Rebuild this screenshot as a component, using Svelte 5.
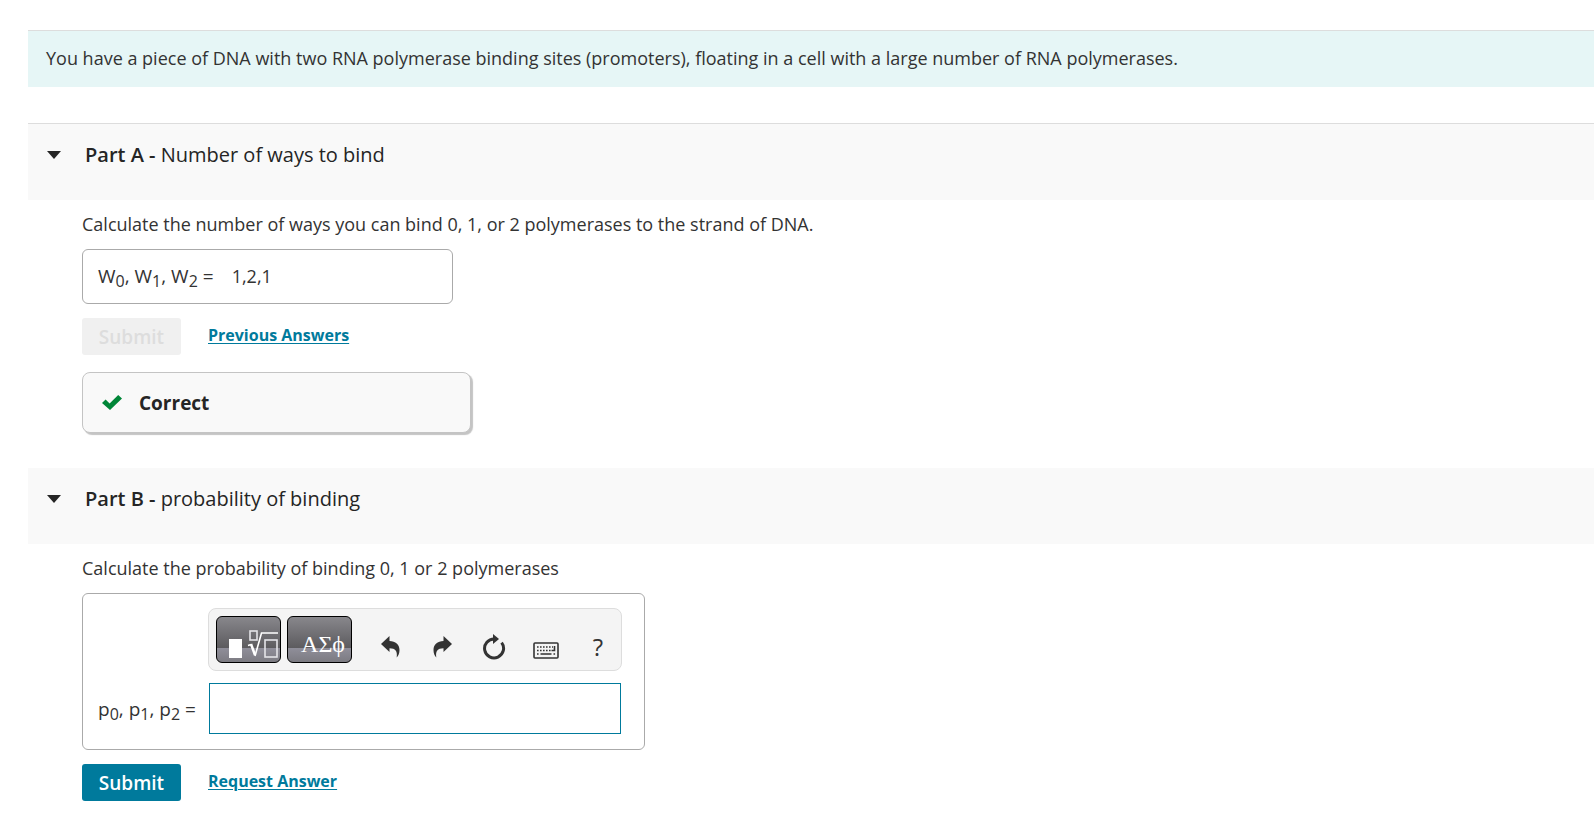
<script>
	let openA = $state(true);
	let openB = $state(true);
	let answerA = $state('1,2,1');
	let answerB = $state('');
	let past = $state([]);
	let future = $state([]);

	function remember() {
		past.push(answerB);
		future = [];
	}

	function undo() {
		if (!past.length) return;
		future.push(answerB);
		answerB = past.pop();
	}

	function redo() {
		if (!future.length) return;
		past.push(answerB);
		answerB = future.pop();
	}

	function insert(text) {
		remember();
		answerB += text;
	}

	function reset() {
		remember();
		answerB = '';
	}
</script>

<svelte:head>
	<title>Polymerase binding</title>
</svelte:head>

<main class="page">
	<p class="intro">
		You have a piece of DNA with two RNA polymerase binding sites (promoters), floating in a cell
		with a large number of RNA polymerases.
	</p>

	<section class="part">
		<h2 class="part-title first">
			<button class="toggle" aria-expanded={openA} onclick={() => (openA = !openA)}>
				<svg class="caret" class:closed={!openA} width="14" height="8" viewBox="0 0 14 8">
					<path d="M0 0h14L7 8z" fill="currentColor" />
				</svg>
				<span><b>Part A -</b> Number of ways to bind</span>
			</button>
		</h2>
		{#if openA}
			<div class="part-body">
				<p class="prompt">
					Calculate the number of ways you can bind 0, 1, or 2 polymerases to the strand of DNA.
				</p>
				<div class="answer done">
					<label for="answer-a">W<sub>0</sub>, W<sub>1</sub>, W<sub>2</sub> =</label>
					<input id="answer-a" type="text" readonly bind:value={answerA} />
				</div>
				<div class="actions">
					<button class="submit" disabled>Submit</button>
					<a href="#previous">Previous Answers</a>
				</div>
				<div class="feedback">
					<svg width="20" height="15" viewBox="0 0 20 15">
						<path d="M0 8l3.6-3.6 4 4L16.2 0 20 3.6 8 15z" fill="#008638" />
					</svg>
					<span>Correct</span>
				</div>
			</div>
		{/if}
	</section>

	<section class="part">
		<h2 class="part-title">
			<button class="toggle" aria-expanded={openB} onclick={() => (openB = !openB)}>
				<svg class="caret" class:closed={!openB} width="14" height="8" viewBox="0 0 14 8">
					<path d="M0 0h14L7 8z" fill="currentColor" />
				</svg>
				<span><b>Part B -</b> probability of binding</span>
			</button>
		</h2>
		{#if openB}
			<div class="part-body">
				<p class="prompt">Calculate the probability of binding 0, 1 or 2 polymerases</p>
				<div class="answer editor">
					<div class="toolbar">
						<button class="palette" aria-label="Templates" onclick={() => insert('√')}>
							<svg width="63" height="45" viewBox="0 0 63 45">
								<rect x="12" y="22" width="13" height="19" fill="#fff" />
								<g fill="none" stroke="#fff">
									<path d="M31 28.500l3-1" stroke-width="1.500" />
									<path d="M34 27l4 11" stroke-width="2.500" />
									<path d="M38 39l6.500-23H61" stroke-width="1.600" />
									<rect x="33" y="14" width="7" height="9" stroke="#e4e4e8" stroke-width="1.600" />
									<rect x="48" y="23" width="12" height="17" stroke="#e4e4e8" stroke-width="1.600" />
								</g>
							</svg>
						</button>
						<button class="palette symbols" onclick={() => insert('ϕ')}>ΑΣϕ</button>
						<div class="tools">
							<button class="tool" aria-label="Undo" onclick={undo}>
								<svg width="19" height="22" viewBox="0 0 19 22">
									<path
										d="M0 8L8.500 0v5C14.500 5 18.500 8.500 18.500 14c0 3-1 5.500-2.800 7.500C16.600 15 14.500 12.300 8.500 12.300V16z"
										fill="#333"
									/>
								</svg>
							</button>
							<button class="tool" aria-label="Redo" onclick={redo}>
								<svg width="19" height="22" viewBox="0 0 19 22">
									<path
										d="M19 8L10.500 0v5C4.500 5 .500 8.500 .500 14c0 3 1 5.500 2.800 7.500C2.400 15 4.500 12.300 10.500 12.300V16z"
										fill="#333"
									/>
								</svg>
							</button>
							<button class="tool" aria-label="Reset" onclick={reset}>
								<svg width="24" height="26" viewBox="0 0 24 26">
									<path
										d="M12.500 4.900A9.500 9.500 0 1 0 19.600 8.600"
										fill="none"
										stroke="#333"
										stroke-width="3"
									/>
									<path d="M11 0l6 5-6 5z" fill="#333" />
								</svg>
							</button>
							<button class="tool" aria-label="Keyboard shortcuts">
								<svg class="keys" width="26" height="17" viewBox="0 0 26 17">
									<rect x="1" y="1" width="24" height="15" rx="1" fill="none" stroke="#333" stroke-width="1.600" />
									<path
										d="M4 5h16M4 8.500h14"
										stroke="#333"
										stroke-width="1.600"
										stroke-dasharray="1.600 1.400"
									/>
									<path
										d="M21.500 4v4.500h-3M7.500 12h11M4 12h1.600M20.500 12h1.600"
										fill="none"
										stroke="#333"
										stroke-width="1.600"
									/>
								</svg>
							</button>
							<button class="tool help" aria-label="Help">?</button>
						</div>
					</div>
					<label for="answer-b">p<sub>0</sub>, p<sub>1</sub>, p<sub>2</sub> =</label>
					<input id="answer-b" type="text" bind:value={answerB} />
				</div>
				<div class="actions">
					<button class="submit">Submit</button>
					<a href="#request">Request Answer</a>
				</div>
			</div>
		{/if}
	</section>
</main>

<style>
	:global(body) {
		margin: 0;
		background: #fff;
	}

	.page {
		padding: 30px 0 0 28px;
		font-family: 'Segoe UI', 'Open Sans', sans-serif;
		font-size: 18px;
		line-height: 24px;
		color: #333;
	}

	button,
	input {
		font: inherit;
		color: inherit;
	}

	button {
		padding: 0;
		border: none;
		background: none;
		cursor: pointer;
	}

	.intro {
		margin: 0 0 36px;
		padding: 15px 18px 17px;
		border-top: 1px solid #ddd;
		background: #e6f6f6;
	}

	/* part headings */
	.part-title {
		margin: 0;
		padding: 19px 19px 33px;
		background: #f9f9f9;
		font-size: 20px;
		font-weight: 400;
		color: #252525;
	}

	.part-title.first {
		border-top: 1px solid #ddd;
	}

	.toggle {
		display: flex;
		align-items: center;
		gap: 24px;
		text-align: left;
	}

	.toggle b {
		font-weight: 600;
	}

	.caret.closed {
		transform: rotate(-90deg);
	}

	.part-body {
		padding: 12px 0 35px 54px;
	}

	.prompt {
		margin: 0 0 13px;
	}

	/* answer boxes */
	.answer {
		box-sizing: border-box;
		border: 1px solid #aaa;
		border-radius: 6px;
		background: #fff;
	}

	.answer label {
		font-size: 19px;
	}

	.answer sub {
		font-size: 16px;
		line-height: 0;
		vertical-align: -4px;
	}

	.done {
		display: flex;
		align-items: center;
		gap: 18px;
		width: 371px;
		height: 55px;
		padding: 0 15px 2px;
	}

	.done input {
		flex: 1;
		min-width: 0;
		padding: 0;
		border: none;
		outline: none;
		background: none;
	}

	.editor {
		display: grid;
		grid-template-columns: 110px 414px;
		row-gap: 12px;
		align-items: center;
		width: 563px;
		padding: 14px 15px 15px;
	}

	.editor input {
		box-sizing: border-box;
		width: 412px;
		height: 51px;
		padding: 0 10px;
		border: 1px solid #007a9c;
		justify-self: center;
	}

	.toolbar {
		grid-column: 2;
		display: flex;
		align-items: flex-end;
		gap: 6px;
		padding: 7px;
		border: 1px solid #ddd;
		border-radius: 8px;
		background: #f4f4f4;
	}

	.palette {
		box-sizing: border-box;
		width: 65px;
		height: 47px;
		border: 1px solid #000;
		border-radius: 6px;
		background: linear-gradient(#88878c, #5d5c5f 68%, #908f9a 68%, #7c7b82);
		color: #fff;
		overflow: hidden;
	}

	.palette svg {
		display: block;
	}

	.symbols {
		padding: 8px 6px 0 0;
		font-family: 'Liberation Serif', serif;
		font-size: 24px;
		text-align: right;
	}

	.tools {
		display: flex;
		gap: 24px;
		margin-left: 18px;
	}

	.tool {
		display: flex;
		align-items: center;
		justify-content: center;
		width: 28px;
		height: 32px;
		color: #333;
	}

	.keys {
		margin-top: 6px;
	}

	.help {
		font-size: 24px;
	}

	/* submit row */
	.actions {
		display: flex;
		align-items: center;
		gap: 27px;
		margin-top: 14px;
	}

	.actions a {
		font-size: 16px;
		line-height: 34px;
		font-weight: 700;
		color: #007a9c;
		align-self: flex-start;
		text-underline-offset: 2px;
	}

	.submit {
		width: 99px;
		height: 37px;
		border-radius: 3px;
		background: #007a9c;
		font-size: 19px;
		font-weight: 600;
		color: #fff;
	}

	.submit:disabled {
		background: #f0f0f0;
		color: #ddd;
		cursor: default;
	}

	.feedback {
		box-sizing: border-box;
		display: flex;
		align-items: center;
		gap: 17px;
		width: 389px;
		height: 61px;
		margin-top: 17px;
		padding: 0 19px;
		border: 1px solid #c4c4c4;
		border-radius: 8px;
		background: #f9f9f9;
		box-shadow: 2px 2px 1px #c4c4c4;
		font-size: 19px;
		font-weight: 700;
		color: #252525;
	}
</style>
